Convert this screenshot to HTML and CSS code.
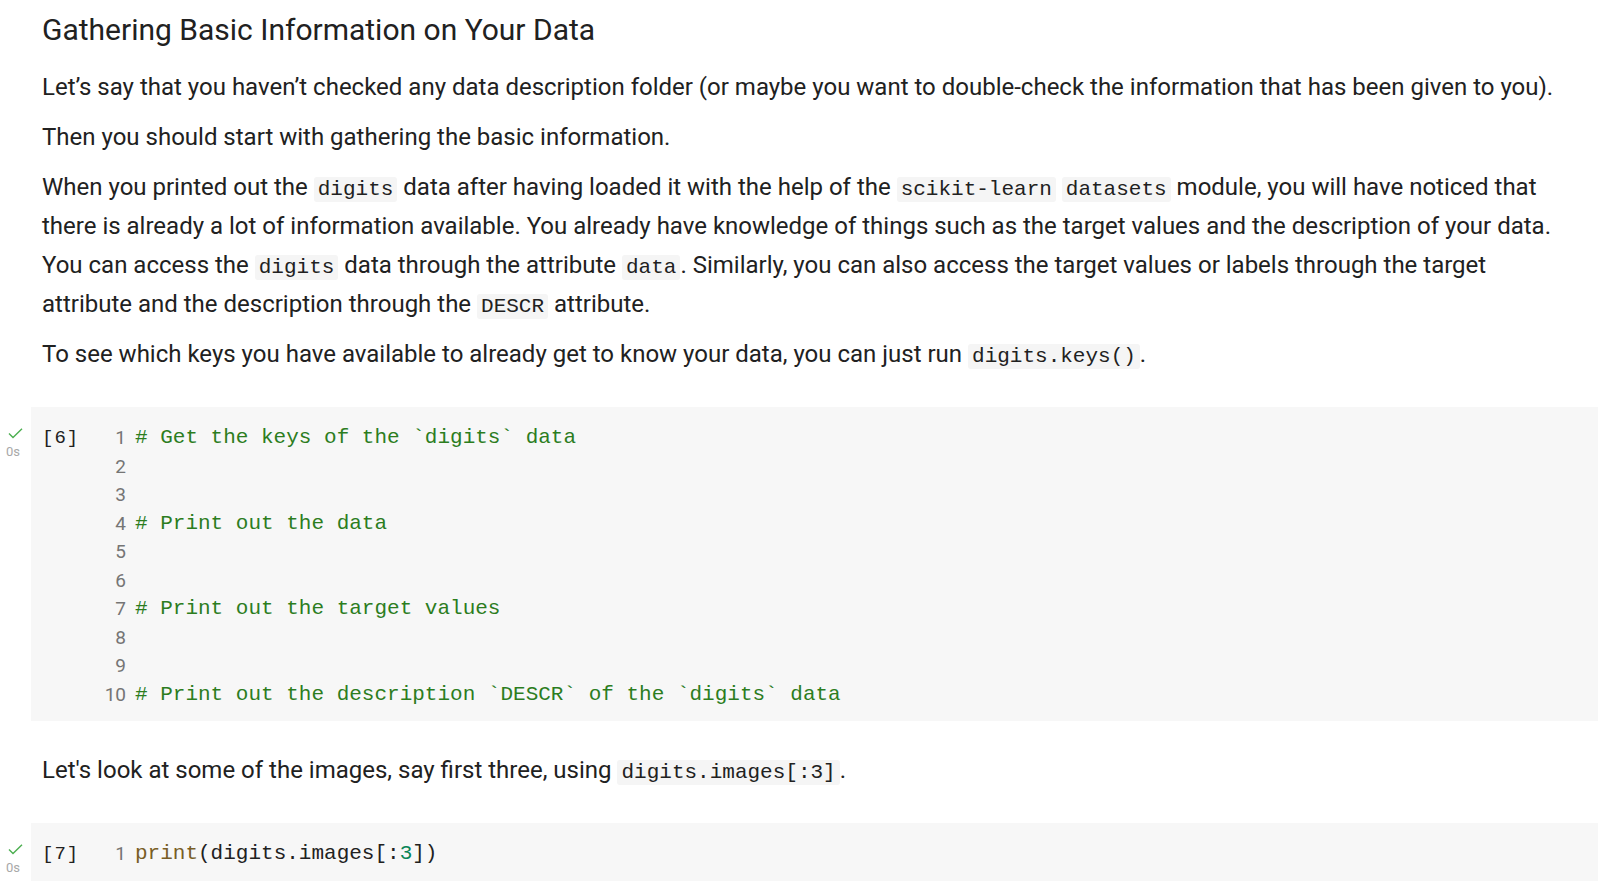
FILE: index.html
```html
<!DOCTYPE html>
<html>
<head>
<meta charset="utf-8">
<link rel="stylesheet" href="styles.css">
</head>
<body>
<div class="md">
  <h2 class="title">Gathering Basic Information on Your Data</h2>
  <p>Let’s say that you haven’t checked any data description folder (or maybe you want to double-check the information that has been given to you).</p>
  <p>Then you should start with gathering the basic information.</p>
  <p>When you printed out the <code>digits</code> data after having loaded it with the help of the <code>scikit-learn</code> <code>datasets</code> module, you will have noticed that there is already a lot of information available. You already have knowledge of things such as the target values and the description of your data. You can access the <code>digits</code> data through the attribute <code>data</code>. Similarly, you can also access the target values or labels through the target attribute and the description through the <code>DESCR</code> attribute.</p>
  <p>To see which keys you have available to already get to know your data, you can just run <code>digits.keys()</code>.</p>
</div>

<div class="cell first">
  <div class="gutter">
    <svg class="check" width="15" height="11" viewBox="0 0 15 11"><path d="M1 5.5 L5 9.5 L14 0.7" fill="none" stroke="#4caf50" stroke-width="1.4"/></svg>
    <span class="dur">0s</span>
  </div>
  <div class="count">[6]</div>
  <div class="lines">
    <div class="ln"><span class="num">1</span><span class="cm"># Get the keys of the `digits` data</span></div>
    <div class="ln"><span class="num">2</span></div>
    <div class="ln"><span class="num">3</span></div>
    <div class="ln"><span class="num">4</span><span class="cm"># Print out the data</span></div>
    <div class="ln"><span class="num">5</span></div>
    <div class="ln"><span class="num">6</span></div>
    <div class="ln"><span class="num">7</span><span class="cm"># Print out the target values</span></div>
    <div class="ln"><span class="num">8</span></div>
    <div class="ln"><span class="num">9</span></div>
    <div class="ln"><span class="num">10</span><span class="cm"># Print out the description `DESCR` of the `digits` data</span></div>
  </div>
</div>

<div class="md">
  <p class="mid">Let's look at some of the images, say first three, using <code>digits.images[:3]</code>.</p>
</div>

<div class="cell second">
  <div class="gutter">
    <svg class="check" width="15" height="11" viewBox="0 0 15 11"><path d="M1 5.5 L5 9.5 L14 0.7" fill="none" stroke="#4caf50" stroke-width="1.4"/></svg>
    <span class="dur">0s</span>
  </div>
  <div class="count">[7]</div>
  <div class="lines">
    <div class="ln"><span class="num">1</span><span class="fn">print</span><span class="tx">(digits.images[:</span><span class="nb">3</span><span class="tx">])</span></div>
  </div>
</div>
</body>
</html>
```

FILE: styles.css
```css
html, body {
  margin: 0;
  padding: 0;
  background: #ffffff;
}
body {
  font-family: Roboto, "Noto Sans", sans-serif;
  color: #212121;
  overflow: hidden;
}
.md {
  padding: 0 20px 0 42px;
}
.title {
  margin: 10px 0 18px;
  font-size: 30px;
  line-height: 40px;
  font-weight: 400;
}
.md p {
  margin: 0 0 11px;
  font-size: 24px;
  line-height: 39px;
}
code {
  font-family: "Liberation Mono", monospace;
  font-size: 21px;
  line-height: 1;
  background: #f5f5f5;
  border-radius: 3px;
  padding: 1px 4px;
}
.cell {
  position: relative;
  display: flex;
  align-items: flex-start;
  margin-left: 31px;
  background: #f7f7f7;
  padding: 17px 0 12px;
}
.cell.first {
  margin-top: 33px;
}
.cell.second {
  margin-top: 33px;
}
.md p.mid {
  margin-top: 30px;
}
.gutter {
  position: absolute;
  left: -31px;
  top: 0;
  width: 31px;
  display: flex;
  flex-direction: column;
  align-items: center;
  padding-top: 21px;
}
.check {
  display: block;
}
.dur {
  font-size: 13px;
  line-height: 15px;
  color: #a8a8a8;
  margin-top: 5px;
  margin-left: -5px;
}
.count {
  width: 60px;
  padding-left: 11px;
  font-family: "Liberation Mono", monospace;
  font-size: 19px;
  line-height: 28.5px;
  letter-spacing: 1px;
  color: #212121;
}
.lines {
  display: flex;
  flex-direction: column;
}
.ln {
  display: flex;
  height: 28.5px;
  line-height: 28.5px;
  white-space: pre;
}
.num {
  width: 24px;
  text-align: right;
  margin-right: 9px;
  font-family: Roboto, sans-serif;
  font-size: 19px;
  color: #757575;
}
.cm, .fn, .tx, .nb {
  font-family: "Liberation Mono", monospace;
  font-size: 21px;
}
.cm { color: #2c7d1e; }
.fn { color: #795e26; }
.tx { color: #212121; }
.nb { color: #098658; }
```
